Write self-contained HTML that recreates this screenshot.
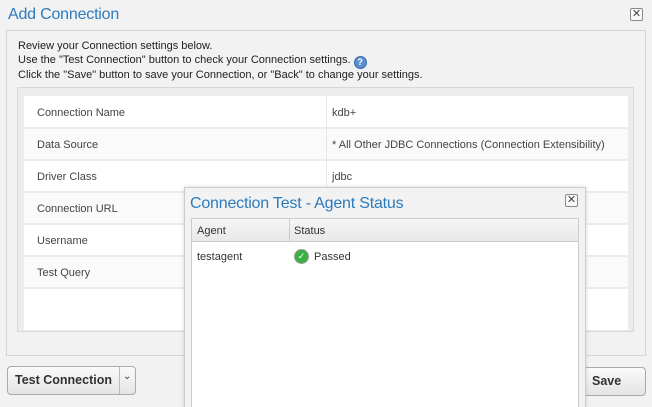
<!DOCTYPE html>
<html><head><style>
html,body{margin:0;width:652px;height:407px;overflow:hidden}
body{background:#f2f2f2;font-family:"Liberation Sans",sans-serif;position:relative;font-size:11px;color:#333}
.a{position:absolute}
.title{left:8px;top:6px;font-size:16px;color:#2c7bbd;letter-spacing:-0.2px}
.x{width:11px;height:11px;border:1px solid #888;border-radius:2px;background:#f8f8f8;font-size:11px;line-height:10px;text-align:center;color:#444}
.row{position:absolute;left:24px;width:604px;height:30px;border-bottom:2px solid #ececec;background:#fff}
.row span{position:absolute;top:10px;font-size:11px;color:#444}
.btn{border:1px solid #aaa;border-radius:4px;background:linear-gradient(#fafafa,#e4e4e4);font-weight:bold;font-size:12.5px;color:#333}
</style></head><body>
<div class="a title">Add Connection</div>
<div class="a x" style="left:630px;top:8px">✕</div>
<div class="a" style="left:6px;top:30px;width:638px;height:324px;border:1px solid #d4d4d4"></div>
<div class="a" style="left:18px;top:40px;line-height:13.5px;font-size:11px;color:#222">Review your Connection settings below.<br>Use the "Test Connection" button to check your Connection settings. <span style="display:inline-block;width:11px;height:11px;border-radius:50%;background:#5b8fd0;border:1px solid #3a6aa8;color:#fff;font-size:9px;line-height:11px;text-align:center;vertical-align:-2px;font-weight:bold">?</span><br>Click the "Save" button to save your Connection, or "Back" to change your settings.</div>
<div class="a" style="left:17px;top:87px;width:615px;height:243px;border:1px solid #d8d8d8;background:#ececec"></div>
<div class="a" style="left:24px;top:96px;width:604px;height:234px;background:#fff"></div>
<div class="row" style="top:97px"><span style="left:13px">Connection Name</span><span style="left:308px">kdb+</span></div>
<div class="row" style="top:129px;background:#fafafa"><span style="left:13px">Data Source</span><span style="left:308px">* All Other JDBC Connections (Connection Extensibility)</span></div>
<div class="row" style="top:161px"><span style="left:13px">Driver Class</span><span style="left:308px">jdbc</span></div>
<div class="row" style="top:193px;background:#fafafa"><span style="left:13px">Connection URL</span></div>
<div class="row" style="top:225px"><span style="left:13px">Username</span></div>
<div class="row" style="top:257px;background:#fafafa"><span style="left:13px">Test Query</span></div>
<div class="a" style="left:326px;top:96px;width:1px;height:193px;background:#e6e6e6"></div>
<div class="a btn" style="left:7px;top:366px;width:127px;height:27px"><span class="a" style="left:7px;top:6px">Test Connection</span><span class="a" style="left:111px;top:0;width:1px;height:27px;background:#bbb"></span><span class="a" style="left:115px;top:4px;font-weight:normal;font-size:10px">⌄</span></div>
<div class="a btn" style="left:583px;top:367px;width:61px;height:27px"><span class="a" style="left:8px;top:6px">Save</span></div>
<div class="a" style="left:184px;top:187px;width:400px;height:222px;background:#f2f2f2;border:1px solid #ccc;box-shadow:0 0 4px rgba(0,0,0,.15)">
<div class="a" style="left:5px;top:7px;font-size:16px;color:#2c7bbd;letter-spacing:-0.2px">Connection Test - Agent Status</div>
<div class="a x" style="left:380px;top:6px">✕</div>
<div class="a" style="left:6px;top:30px;width:386px;height:200px;border:1px solid #ccc;background:#fff">
<div class="a" style="left:0;top:0;width:386px;height:22px;background:linear-gradient(#f6f6f6,#e8e8e8);border-bottom:1px solid #ccc"></div>
<div class="a" style="left:97px;top:0;width:1px;height:22px;background:#ccc"></div>
<span class="a" style="left:5px;top:6px">Agent</span><span class="a" style="left:102px;top:6px">Status</span>
<span class="a" style="left:5px;top:32px">testagent</span>
<span class="a" style="left:102px;top:30px;width:13px;height:13px;border-radius:50%;background:#3cb043;border:1px solid #999;color:#fff;font-size:9px;line-height:13px;text-align:center">✓</span>
<span class="a" style="left:122px;top:32px">Passed</span>
</div></div>
</body></html>
